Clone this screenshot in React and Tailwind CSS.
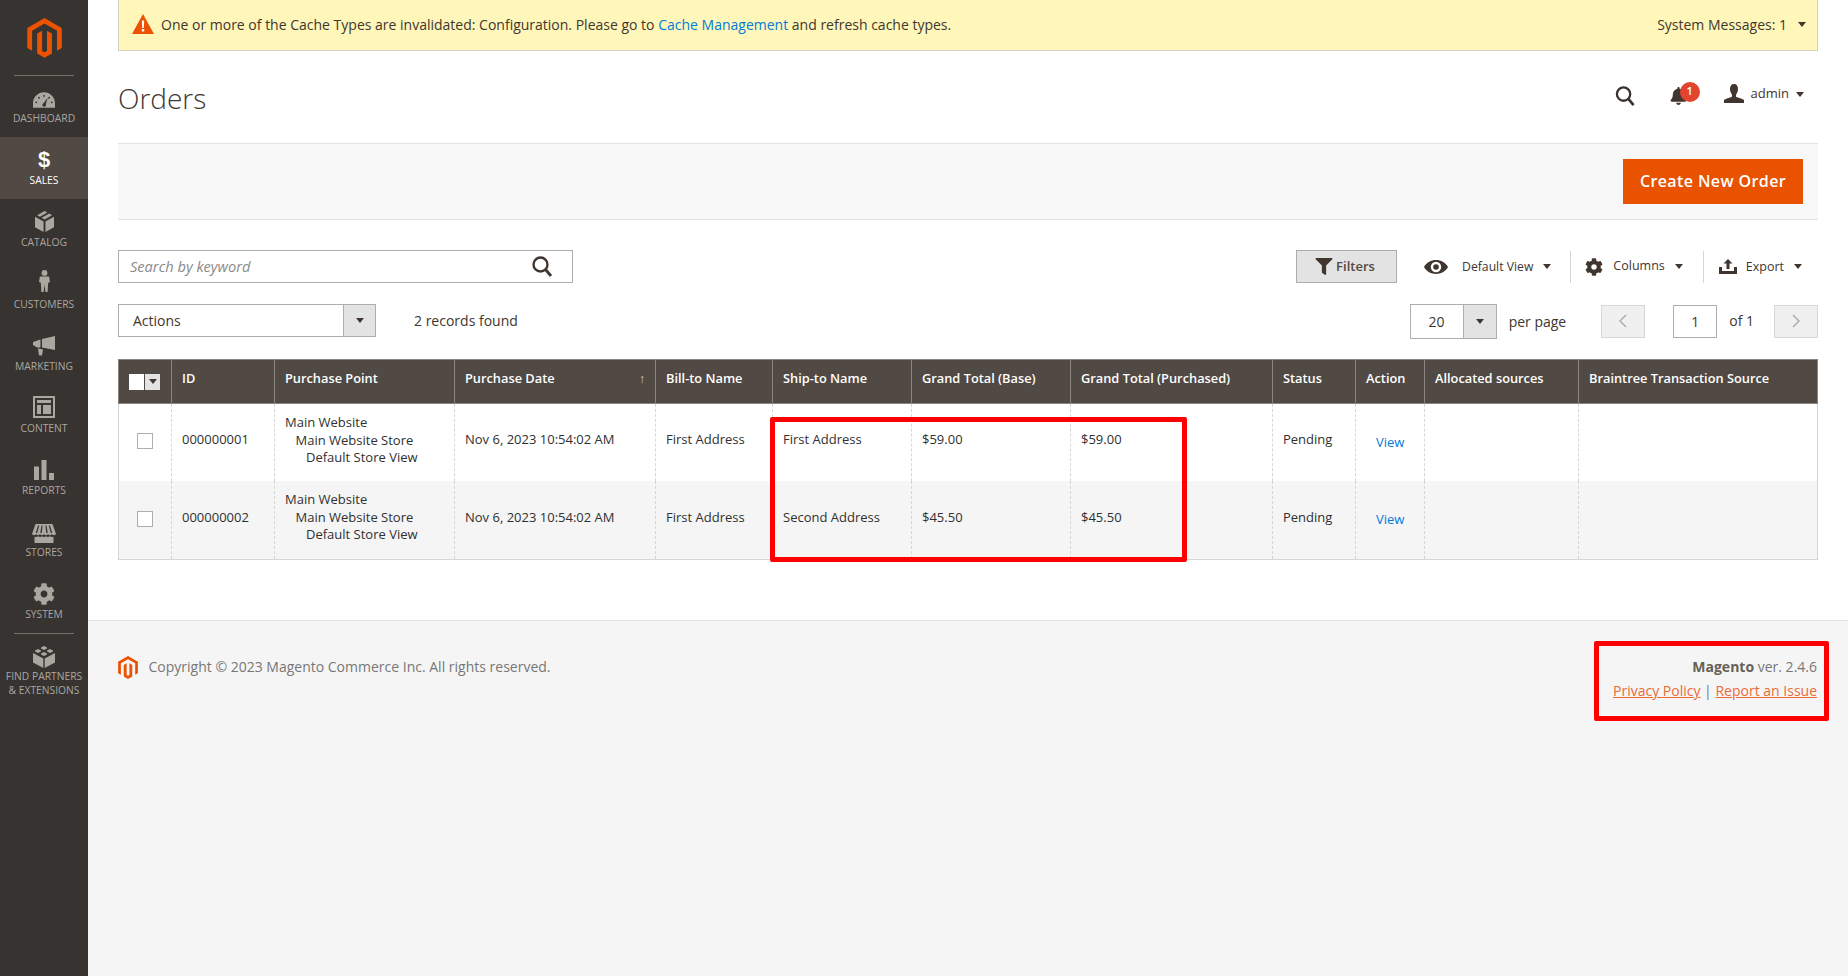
import { FaBell, FaCog, FaFilter } from 'react-icons/fa';

const MagentoLogo = ({ className }) => (
  <svg viewBox="0 0 43 50" className={className} fill="currentColor">
    <path d="M21.5 0 0 12.4v25l6 3.5V15.9l15.5-9 15.6 9V41l6-3.5V12.4z" />
    <path d="M24.6 41.1l-3.1 1.8-3-1.8V15.9l-6.2 3.6v25l9.2 5.3 9.3-5.3v-25l-6.2-3.6z" />
  </svg>
);

const Dashboard = () => (
  <svg viewBox="0 0 24 17" className="w-[22px] h-[16px]" fill="currentColor">
    <path fillRule="evenodd" d="M0 17v-5C0 5.4 5.4 0 12 0s12 5.4 12 12v5H0zM12 3a1 1 0 1 0 0 2 1 1 0 0 0 0-2zM6.5 5a1 1 0 1 0 0 2 1 1 0 0 0 0-2zM17.5 5a1 1 0 1 0 0 2 1 1 0 0 0 0-2zM3.5 10a1 1 0 1 0 0 2 1 1 0 0 0 0-2zM20.5 10a1 1 0 1 0 0 2 1 1 0 0 0 0-2zM16 6l-4.500 6a2 2 0 1 0 2.500 1z" />
  </svg>
);

const Catalog = () => (
  <svg viewBox="0 0 20 22" className="w-[19px] h-[21px]" fill="currentColor">
    <path d="M10 0l3 1.600L5.200 6 2.200 4.400zM15 2.700l3 1.700-8 4.400-3-1.700zM0 6l9 5v11l-9-5zM20 6v11l-9 5V11z" />
  </svg>
);

const Customers = () => (
  <svg viewBox="0 0 12 24" className="w-[11px] h-[24px] relative -top-[1px]" fill="currentColor">
    <circle cx="6" cy="3.200" r="3.200" />
    <path d="M1 7h10l1 6-2 1-.6 10H7l-1-8-1 8H2.600L2 14l-2-1z" />
  </svg>
);

const Marketing = () => (
  <svg viewBox="0 0 22 20" className="w-[22px] h-[20px]" fill="currentColor">
    <path d="M22 0v14L9 11.500V3zM7.500 3.500v8H4L0 9V6zM5 12.500l3 .6 2 .4-1 6H6z" />
  </svg>
);

const Content = () => (
  <svg viewBox="0 0 22 22" className="w-[22px] h-[22px]" fill="currentColor">
    <path fillRule="evenodd" d="M0 0h22v22H0zM2 2v18h18V2zM4 4h14v3H4zM4 9h4v9H4zM10 9h8v9h-8z" />
  </svg>
);

const Reports = () => (
  <svg viewBox="0 0 20 20" className="w-[20px] h-[20px]" fill="currentColor">
    <path d="M0 6.500h5V20H0zM7.500 0h5v20h-5zM15 13h5v7h-5z" />
  </svg>
);

const Stores = () => (
  <svg viewBox="0 0 24 19" className="w-[24px] h-[19px] relative top-[1px]" fill="currentColor">
    <path fillRule="evenodd" d="M3.500 0h17L24 10c-1 1.600-3.200 1.600-4 0-1 1.600-3 1.600-4 0-1 1.600-3 1.600-4 0-1 1.600-3 1.600-4 0-1 1.600-3 1.600-4 0-.8 1.600-3 1.600-4 0zM6 1.500 3.800 9h1.400L7.200 1.500zM9.500 1.500 8.300 9h1.400l.9-7.500zM13.400 1.500l.9 7.500h1.400l-1.200-7.500zM16.800 1.500 18.800 9h1.400L18 1.500z" />
    <path d="M2.500 12.500c1 .8 2.500.6 3.500-.2 1.500 1 3 1 4 0 1.300 1 2.700 1 4 0 1 1 2.500 1 4 0 1 .8 2.500 1 3.500.2V19h-19z" />
  </svg>
);

const Extensions = () => (
  <svg viewBox="0 0 22 22" className="w-[22px] h-[22px]" fill="currentColor">
    <path d="M11 0l3 1.500v1L11 4 8 2.500v-1zM5 3l3 1.500v1L5 7 2 5.500v-1zM17 3l3 1.500v1L17 7l-3-1.500v-1zM11 6l3 1.500v1L11 10 8 8.500v-1z" />
    <path d="M0 7l10.300 5.500V22L0 16.500zM22 7v9.500L11.700 22v-9.500z" />
  </svg>
);

const navItems = [
  { label: 'Dashboard', icon: <Dashboard /> },
  { label: 'Sales', icon: <span className="relative top-[1px] text-[22px] leading-none font-bold font-['Liberation_Sans',sans-serif]">$</span>, active: true },
  { label: 'Catalog', icon: <Catalog /> },
  { label: 'Customers', icon: <Customers /> },
  { label: 'Marketing', icon: <Marketing /> },
  { label: 'Content', icon: <Content /> },
  { label: 'Reports', icon: <Reports /> },
  { label: 'Stores', icon: <Stores /> },
  { label: 'System', icon: <FaCog className="w-[22px] h-[22px] relative top-[1px]" /> },
];

function Sidebar() {
  return (
    <aside className="w-[88px] shrink-0 bg-[#373330] text-[#aaa6a0] flex flex-col items-stretch">
      <div className="h-[75px] flex justify-center pt-[18px]">
        <MagentoLogo className="w-[35px] h-[40px] text-[#eb5202]" />
      </div>
      <div className="mx-[14px] h-px bg-[#736d68]" />
      <div className="-mt-[1px]">
        {navItems.map((item) => (
          <div
            key={item.label}
            className={`h-[62px] flex flex-col items-center ${item.active ? 'bg-[#514943] text-white' : ''}`}
          >
            <div className="h-[34px] flex items-end justify-center pb-[1px]">{item.icon}</div>
            <div className="text-[10.300px] leading-[14px] mt-[2px] uppercase">{item.label}</div>
          </div>
        ))}
      </div>
      <div className="mx-[14px] h-px bg-[#736d68]" />
      <div className="flex flex-col items-center pt-[12px]">
        <Extensions />
        <div className="text-[10.300px] leading-[14px] mt-[1px] uppercase text-center whitespace-nowrap">
          Find Partners
          <br />& Extensions
        </div>
      </div>
    </aside>
  );
}

const Caret = ({ className = '' }) => (
  <span className={`inline-block w-0 h-0 border-x-[4px] border-x-transparent border-t-[5px] border-t-[#41362f] ${className}`} />
);

const SearchIcon = ({ className }) => (
  <svg viewBox="0 0 20 21" className={className} fill="none" stroke="currentColor">
    <circle cx="8.500" cy="8.500" r="7" strokeWidth="2.400" />
    <path d="M13.500 13.500 19 20" strokeWidth="2.800" />
  </svg>
);

function MessageBar() {
  return (
    <div className="h-[51px] shrink-0 bg-[#fff7b9] border-x border-b border-[#d1d1c4] flex items-center pl-[13px] pr-[11px] pb-[2px] text-[14px] text-[#41362f]">
      <svg viewBox="0 0 22 20" className="w-[22px] h-[20px] mr-[7px]">
        <path d="M11 0 22 20H0z" className="fill-[#eb5202]" />
        <path d="M9.800 6.500h2.400l-.4 7.500h-1.600zM9.800 15h2.400v2.400H9.800z" fill="#fff" />
      </svg>
      <span>
        One or more of the Cache Types are invalidated: Configuration. Please go to{' '}
        <span className="text-[#007bdb]">Cache Management</span> and refresh cache types.
      </span>
      <span className="ml-auto">System Messages: 1</span>
      <Caret className="ml-[11px]" />
    </div>
  );
}

function PageHeader() {
  return (
    <div className="h-[92px] shrink-0 flex items-center text-[#41362f]">
      <h1 className="text-[28px] font-light leading-none pt-[2px]">Orders</h1>
      <div className="ml-auto flex items-center pb-[3px] pr-[14px]">
        <SearchIcon className="w-[20px] h-[20px] text-[#373330]" />
        <div className="relative ml-[34px] w-[31px]">
          <FaBell className="w-[19px] h-[18px] text-[#41362f]" />
          <span className="absolute left-[11px] -top-[5px] w-[20px] h-[20px] rounded-full bg-[#e2452f] text-white text-[11px] font-semibold flex items-center justify-center">
            1
          </span>
        </div>
        <svg viewBox="0 0 20 19" className="w-[20px] h-[19px] ml-[24px] mb-[5px]" fill="currentColor">
          <path d="M10 0c2.800 0 4 2 4 5 0 2.500-1 4.600-2 5.500v2c1 1.200 5 1.500 8 3.500v3H0v-3c3-2 7-2.300 8-3.500v-2C7 9.600 6 7.500 6 5c0-3 1.200-5 4-5z" />
        </svg>
        <span className="ml-[7px] text-[13px] mb-[3px]">admin</span>
        <Caret className="ml-[7px] mb-[3px]" />
      </div>
    </div>
  );
}

function ActionBar() {
  return (
    <div className="h-[77px] shrink-0 bg-[#f8f8f8] border-y border-[#e3e3e3] flex items-center justify-end pr-[15px]">
      <button className="w-[180px] h-[45px] bg-[#e85200] text-white text-[16px] font-semibold tracking-[0.4px] pb-[2px]">
        Create New Order
      </button>
    </div>
  );
}

function ToolbarOne() {
  return (
    <div className="mt-[30px] h-[33px] flex items-center text-[#41362f]">
      <div className="w-[455px] h-[33px] border border-[#adadad] flex items-center pl-[11px] pr-[19px]">
        <span className="italic text-[14.600px] text-[#8a8a8a]">Search by keyword</span>
        <SearchIcon className="ml-auto w-[22px] h-[21px] text-[#41362f]" />
      </div>
      <button className="ml-auto w-[101px] h-[33px] bg-[#e3e3e3] border border-[#adadad] flex items-center pl-[18px] text-[13px] font-semibold text-[#514943]">
        <FaFilter className="w-[18px] h-[17px] text-[#41362f] mr-[3px]" />
        Filters
      </button>
      <svg viewBox="0 0 24 14" className="ml-[27px] w-[24px] h-[14px]" fill="#41362f">
        <path fillRule="evenodd" d="M0 7C5-2.300 19-2.300 24 7 19 16.300 5 16.300 0 7zM12 1.800A5.200 5.200 0 1 0 12 12.200 5.200 5.200 0 0 0 12 1.800z" />
        <circle cx="12" cy="7" r="2.800" />
      </svg>
      <span className="ml-[14px] text-[12.200px] pt-[2px]">Default View</span>
      <Caret className="ml-[10px]" />
      <span className="ml-[19px] w-px h-[32px] bg-[#d6d6d6]" />
      <FaCog className="ml-[14px] w-[18px] h-[18px] text-[#41362f]" />
      <span className="ml-[10px] text-[12.500px]">Columns</span>
      <Caret className="ml-[10px]" />
      <span className="ml-[20px] w-px h-[32px] bg-[#d6d6d6]" />
      <svg viewBox="0 0 18 15" className="ml-[15px] w-[18px] h-[15px]" fill="#41362f">
        <path d="M9 0l4.500 4.500H10.500V10h-3V4.500H4.500zM0 8h3v4h12V8h3v7H0z" />
      </svg>
      <span className="ml-[9px] text-[12.500px] pt-[2px]">Export</span>
      <Caret className="ml-[10px] mr-[16px]" />
    </div>
  );
}

function ToolbarTwo() {
  return (
    <div className="mt-[21px] h-[33px] flex items-center text-[14px] text-[#41362f]">
      <div className="w-[258px] h-[33px] border border-[#adadad] flex items-center pl-[14px]">
        Actions
        <span className="ml-auto w-[32px] h-full bg-[#e3e3e3] border-l border-[#adadad] flex items-center justify-center">
          <Caret />
        </span>
      </div>
      <span className="ml-[38px]">2 records found</span>
      <div className="ml-auto mt-[2px] w-[87px] h-[35px] border border-[#adadad] flex items-center">
        <span className="w-[52px] text-center">20</span>
        <span className="ml-auto w-[33px] h-full bg-[#e3e3e3] border-l border-[#adadad] flex items-center justify-center">
          <Caret />
        </span>
      </div>
      <span className="ml-[12px] pt-[2px]">per page</span>
      <button className="ml-[35px] w-[44px] h-[33px] mt-[1px] bg-[#f0f0f0] border border-[#d6d6d6] flex items-center justify-center text-[#adadad]">
        <svg viewBox="0 0 8 14" className="w-[8px] h-[14px]" fill="none" stroke="currentColor" strokeWidth="1.500">
          <path d="M7 1 1 7l6 6" />
        </svg>
      </button>
      <div className="ml-[28px] w-[44px] h-[33px] mt-[1px] border border-[#adadad] flex items-center justify-center">1</div>
      <span className="ml-[12px]">of 1</span>
      <button className="ml-[20px] w-[44px] h-[33px] mt-[1px] bg-[#f0f0f0] border border-[#d6d6d6] flex items-center justify-center text-[#adadad]">
        <svg viewBox="0 0 8 14" className="w-[8px] h-[14px]" fill="none" stroke="currentColor" strokeWidth="1.500">
          <path d="M1 1l6 6-6 6" />
        </svg>
      </button>
    </div>
  );
}

const columns = [
  { w: 53 },
  { w: 103, title: 'ID' },
  { w: 180, title: 'Purchase Point' },
  { w: 201, title: 'Purchase Date', sort: true },
  { w: 117, title: 'Bill-to Name' },
  { w: 139, title: 'Ship-to Name' },
  { w: 159, title: 'Grand Total (Base)' },
  { w: 202, title: 'Grand Total (Purchased)' },
  { w: 83, title: 'Status' },
  { w: 69, title: 'Action' },
  { w: 154, title: 'Allocated sources' },
  { w: 240, title: 'Braintree Transaction Source' },
];

const orders = [
  { id: '000000001', ship: 'First Address', base: '$59.00', purchased: '$59.00', rowClass: 'bg-white h-[77px]', pt: 'pt-[27px]', boxPt: 'pt-[29px]' },
  { id: '000000002', ship: 'Second Address', base: '$45.50', purchased: '$45.50', rowClass: 'bg-[#f5f5f5] h-[78px]', pt: 'pt-[28px]', boxPt: 'pt-[30px]' },
];

const tdBase = 'align-top border-l border-dashed border-[#d6d6d6] px-[10px] text-[13px] leading-[17.700px]';

function OrdersTable() {
  return (
    <div className="relative mt-[22px]">
      <table className="w-[1700px] table-fixed border-separate border-spacing-0 text-[#303030]">
        <colgroup>
          {columns.map((c, i) => (
            <col key={i} style={{ width: c.w }} />
          ))}
        </colgroup>
        <thead>
          <tr className="h-[45px] bg-[#514943] text-white text-[12.800px] text-left">
            {columns.map((c, i) => (
              <th key={i} className="relative font-semibold border border-r-0 border-[#8a837f] px-[10px] pb-[6px] last:border-r">
                {c.title}
                {i === 0 && (
                  <span className="relative top-[3px] flex w-[31px] h-[16px] bg-white">
                    <span className="ml-auto w-[16px] h-full bg-[#e3e3e3] border-l border-[#514943] flex items-center justify-center">
                      <Caret />
                    </span>
                  </span>
                )}
                {c.sort && <span className="absolute right-[10px] top-[10px] text-[12px] font-normal text-[#cfcfcf]">↑</span>}
              </th>
            ))}
          </tr>
        </thead>
        <tbody>
          {orders.map((o) => (
            <tr key={o.id} className={o.rowClass}>
              <td className={`align-top border-l border-[#d6d6d6] pl-[18px] ${o.boxPt}`}>
                <div className="w-[16px] h-[16px] border border-[#adadad] bg-white" />
              </td>
              <td className={`${tdBase} ${o.pt}`}>{o.id}</td>
              <td className={`${tdBase} pt-[10px]`}>
                <div>Main Website</div>
                <div className="pl-[10.500px]">Main Website Store</div>
                <div className="pl-[21px]">Default Store View</div>
              </td>
              <td className={`${tdBase} ${o.pt}`}>Nov 6, 2023 10:54:02 AM</td>
              <td className={`${tdBase} ${o.pt}`}>First Address</td>
              <td className={`${tdBase} ${o.pt}`}>{o.ship}</td>
              <td className={`${tdBase} ${o.pt}`}>{o.base}</td>
              <td className={`${tdBase} ${o.pt}`}>{o.purchased}</td>
              <td className={`${tdBase} ${o.pt}`}>Pending</td>
              <td className="align-top border-l border-dashed border-[#d6d6d6] pl-[20px] pt-[29px] text-[13px] leading-[18px] text-[#007bdb]">
                View
              </td>
              <td className={tdBase} />
              <td className={`${tdBase} border-r [border-right-style:solid]`} />
            </tr>
          ))}
          <tr>
            <td colSpan={12} className="h-px bg-[#d6d6d6]" />
          </tr>
        </tbody>
      </table>
      <div className="absolute left-[652px] top-[58px] w-[417px] h-[145px] border-[5px] border-[#ff0000] rounded-[2px]" />
    </div>
  );
}

function Footer() {
  return (
    <footer className="relative flex-1 bg-[#f5f5f5] border-t border-[#e3e3e3] flex pl-[30px] pr-[31px] pt-[35px] text-[14px] text-[#777777]">
      <MagentoLogo className="w-[20px] h-[23px] text-[#eb5202]" />
      <span className="ml-[10.500px] leading-[22px]">Copyright © 2023 Magento Commerce Inc. All rights reserved.</span>
      <div className="ml-auto text-right leading-[24px] -mt-[1px]">
        <div>
          <span className="font-bold text-[#676056]">Magento</span> ver. 2.4.6
        </div>
        <div>
          <span className="text-[#eb6a38] underline">Privacy Policy</span>
          <span className="text-[#777777]"> | </span>
          <span className="text-[#eb6a38] underline">Report an Issue</span>
        </div>
      </div>
      <div className="absolute left-[1506px] top-[20px] w-[235px] h-[80px] border-[5px] border-[#ff0000] rounded-[2px]" />
    </footer>
  );
}

export default function App() {
  return (
    <div className="flex w-[1848px] h-[976px] overflow-hidden bg-white font-['Open_Sans',sans-serif]">
      <Sidebar />
      <main className="flex-1 flex flex-col">
        <div className="h-[620px] shrink-0 px-[30px] flex flex-col">
          <MessageBar />
          <PageHeader />
          <ActionBar />
          <ToolbarOne />
          <ToolbarTwo />
          <OrdersTable />
        </div>
        <Footer />
      </main>
    </div>
  );
}
